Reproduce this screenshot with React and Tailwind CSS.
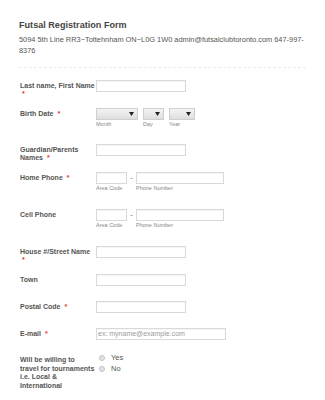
const Star = () => <span className="text-[#e53935] ml-[4px]">*</span>;

function Label({ children, star, starBreak }) {
  return (
    <div className="w-[76px] shrink-0 mt-[1.75px] text-[7px] leading-[8.5px] font-bold text-[#555]">
      {children}
      {star && (starBreak ? <><br /><span className="text-[#e53935] ml-[2px]">*</span></> : <Star />)}
    </div>
  );
}

const Input = ({ w, placeholder }) => (
  <div
    className="h-[12px] border border-[#d9d9d9] bg-white shadow-[inset_0_1px_1px_rgba(0,0,0,0.04)] text-[7px] leading-[10px] pl-[1px] text-[#9a9a9a] whitespace-nowrap overflow-hidden"
    style={{ width: w }}
  >
    {placeholder}
  </div>
);

const Select = ({ w }) => (
  <div
    className="h-[12px] border border-[#cfcfcf] bg-gradient-to-b from-[#f4f4f4] to-[#dedede] flex items-center justify-end pr-[3px]"
    style={{ width: w }}
  >
    <svg width="5" height="4" viewBox="0 0 5 4"><path d="M0 0h5L2.5 4z" fill="#222" /></svg>
  </div>
);

const Sub = ({ children, w }) => (
  <div className="text-[5.5px] leading-[7px] text-[#888] mt-[1px]" style={{ width: w }}>{children}</div>
);

function Row({ h, children }) {
  return <div className={`flex items-start pl-[20px] pt-[7px] ${h}`}>{children}</div>;
}

function PhoneField() {
  return (
    <div className="flex items-start">
      <div>
        <Input w={31} />
        <Sub>Area Code</Sub>
      </div>
      <div className="w-[9px] text-center text-[7px] leading-[12px] text-[#555]">-</div>
      <div>
        <Input w={88} />
        <Sub>Phone Number</Sub>
      </div>
    </div>
  );
}

export default function App() {
  return (
    <div className="w-[325px] h-[400px] overflow-hidden bg-white font-['Liberation_Sans',Arial,sans-serif]">
      <div className="px-[19px] pt-[19px]">
        <h1 className="text-[9.1px] leading-[12px] font-bold text-[#444]">Futsal Registration Form</h1>
        <p className="mt-[3px] text-[7.4px] leading-[11px] text-[#555] whitespace-nowrap">
          5094 5th Line RR3~Tottehnham ON~L0G 1W0 admin@futsalclubtoronto.com 647-997-
          <br />
          8376
        </p>
        <div className="mt-[11px] border-t border-dashed border-[#ececec]" />
      </div>

      <Row h="h-[28px] mt-[5px]">
        <Label star starBreak>Last name, First Name</Label>
        <Input w={90} />
      </Row>

      <Row h="h-[36px]">
        <Label star>Birth Date</Label>
        <div className="flex gap-[5px]">
          <div><Select w={42} /><Sub>Month</Sub></div>
          <div><Select w={21} /><Sub>Day</Sub></div>
          <div><Select w={26} /><Sub>Year</Sub></div>
        </div>
      </Row>

      <Row h="h-[28px]">
        <Label>Guardian/Parents<br />Names<Star /></Label>
        <Input w={90} />
      </Row>

      <Row h="h-[37px]">
        <Label star>Home Phone</Label>
        <PhoneField />
      </Row>

      <Row h="h-[37px]">
        <Label>Cell Phone</Label>
        <PhoneField />
      </Row>

      <Row h="h-[28px]">
        <Label star starBreak>House #/Street Name</Label>
        <Input w={90} />
      </Row>

      <Row h="h-[27px]">
        <Label>Town</Label>
        <Input w={90} />
      </Row>

      <Row h="h-[27px]">
        <Label star>Postal Code</Label>
        <Input w={90} />
      </Row>

      <Row h="h-[27px]">
        <Label star>E-mail</Label>
        <Input w={130} placeholder="ex: myname@example.com" />
      </Row>

      <div className="flex items-start pl-[20px] pt-[8px]">
        <div className="w-[76px] shrink-0 text-[7px] leading-[8.5px] font-bold text-[#555]">
          Will be willing to<br />travel for tournaments<br />i.e. Local &amp;<br />International
        </div>
        <div className="ml-[3px] -mt-[1px] flex flex-col gap-[5px] text-[7.5px] leading-[7px] text-[#555]">
          {["Yes", "No"].map((o) => (
            <div key={o} className="flex items-center">
              <span className="w-[6px] h-[6px] rounded-full border border-[#c4c4c4] bg-[#e2e2e2]" />
              <span className="ml-[6px] -mt-[2px]">{o}</span>
            </div>
          ))}
        </div>
      </div>
    </div>
  );
}
